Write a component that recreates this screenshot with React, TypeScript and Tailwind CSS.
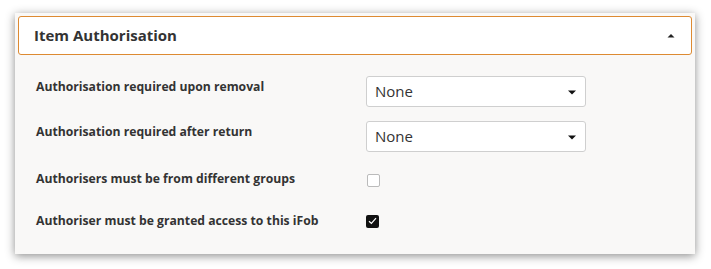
const font = { fontFamily: '"Open Sans", "Liberation Sans", sans-serif' };

const Select = ({ value }: { value: string }) => (
  <div className="flex h-[31px] w-[220px] items-center justify-between rounded-[3px] border border-[#cfcfcf] bg-white pl-[8px] pr-[8px]">
    <span className="text-[15px] text-[#333]">{value}</span>
    <svg width="10" height="6" viewBox="0 0 10 6" className="mt-[3px]">
      <path d="M1 0.5 L9 0.5 L5 4.5 Z" fill="#111" />
    </svg>
  </div>
);

const App = () => {
  return (
    <div className="h-[269px] w-[711px] bg-white pl-[15px] pt-[13px]" style={font}>
      <div className="h-[241px] w-[680px] bg-[#f9f8f7] p-[3px] shadow-[0_2px_9px_rgba(0,0,0,0.45)]">
        <div className="flex h-[39px] items-center justify-between rounded-[3px] border-[1.5px] border-[#dd8a32] bg-white pl-[15px] pr-[16px]">
          <span className="text-[15px] font-bold text-[#333]">Item Authorisation</span>
          <svg width="8" height="5" viewBox="0 0 8 5">
            <path d="M0.5 4.5 L7.5 4.5 L4 1 Z" fill="#222" />
          </svg>
        </div>

        <div className="pl-[18px] pt-[21px]">
          <div className="flex items-start">
            <div className="w-[330px] pt-[2px] text-[12.2px] font-bold text-[#333]">
              Authorisation required upon removal
            </div>
            <Select value="None" />
          </div>
          <div className="mt-[14px] flex items-start">
            <div className="w-[330px] pt-[2px] text-[12.2px] font-bold text-[#333]">
              Authorisation required after return
            </div>
            <Select value="None" />
          </div>
          <div className="mt-[18px] flex items-center">
            <div className="w-[331px] text-[12.2px] font-bold text-[#333]">
              Authorisers must be from different groups
            </div>
            <div className="mt-[3px] h-[13px] w-[13px] rounded-[2px] border border-[#bbb] bg-white" />
          </div>
          <div className="mt-[24px] flex items-center">
            <div className="w-[330px] text-[12.2px] font-bold text-[#333]">
              Authoriser must be granted access to this iFob
            </div>
            <div className="flex h-[13px] w-[13px] items-center justify-center rounded-[2px] bg-[#111]">
              <svg width="9" height="8" viewBox="0 0 9 8">
                <path d="M1 4.2 L3.4 6.5 L8 1.2" stroke="#fff" strokeWidth="1.2" fill="none" />
              </svg>
            </div>
          </div>
        </div>
      </div>
    </div>
  );
};

export default App;
